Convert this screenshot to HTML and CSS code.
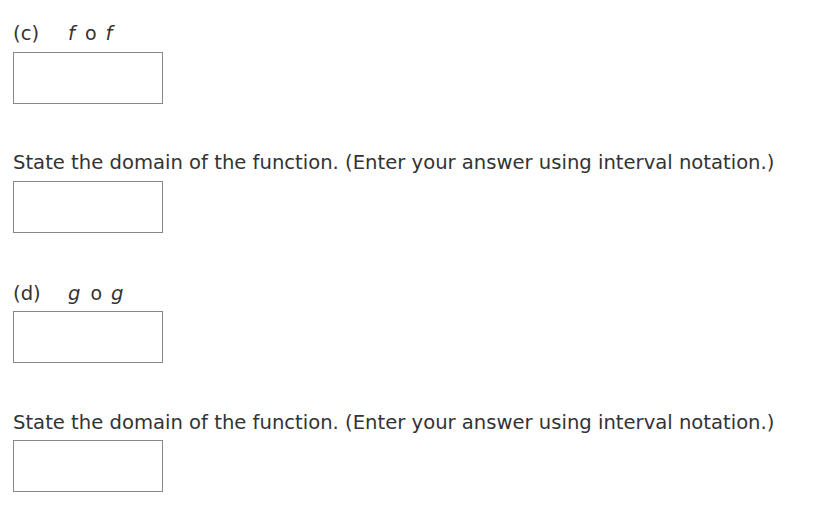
FILE: index.html
```html
<!DOCTYPE html>
<html>
<head>
<meta charset="utf-8">
<link rel="stylesheet" href="styles.css">
</head>
<body>
<div class="page">
  <div class="part part-c">
    <div class="label"><span class="tag">(c)</span><span class="expr"><i>f</i><span class="comp">o</span><i>f</i></span></div>
    <div class="answer"></div>
  </div>
  <div class="part part-domain">
    <div class="prompt">State the domain of the function. (Enter your answer using interval notation.)</div>
    <div class="answer"></div>
  </div>
  <div class="part part-d">
    <div class="label"><span class="tag">(d)</span><span class="expr"><i>g</i><span class="comp">o</span><i>g</i></span></div>
    <div class="answer"></div>
  </div>
  <div class="part part-domain last">
    <div class="prompt">State the domain of the function. (Enter your answer using interval notation.)</div>
    <div class="answer"></div>
  </div>
</div>
</body>
</html>
```
FILE: styles.css
```css
html, body {
  margin: 0;
  padding: 0;
  background: #ffffff;
}
.page {
  padding: 22px 0 0 13px;
  font-family: Verdana, "DejaVu Sans", sans-serif;
  font-size: 19.6px;
  line-height: 24px;
  color: #333333;
}
.part {
  display: flex;
  flex-direction: column;
  gap: 6px;
}
.part-domain {
  margin-top: 47px;
}
.part-d {
  margin-top: 49px;
  gap: 5px;
}
.part-domain.last {
  margin-top: 48px;
  gap: 5px;
}
.label {
  display: flex;
  align-items: baseline;
  height: 24px;
}
.tag {
  width: 55px;
}
.expr {
  display: flex;
  align-items: baseline;
}
.expr i {
  font-style: italic;
}
.comp {
  font-size: 19px;
  line-height: 1;
  font-weight: normal;
  margin: 0 9px 0 10px;
}
.answer {
  width: 148px;
  height: 50px;
  border: 1px solid #888888;
  background: #ffffff;
}
```
